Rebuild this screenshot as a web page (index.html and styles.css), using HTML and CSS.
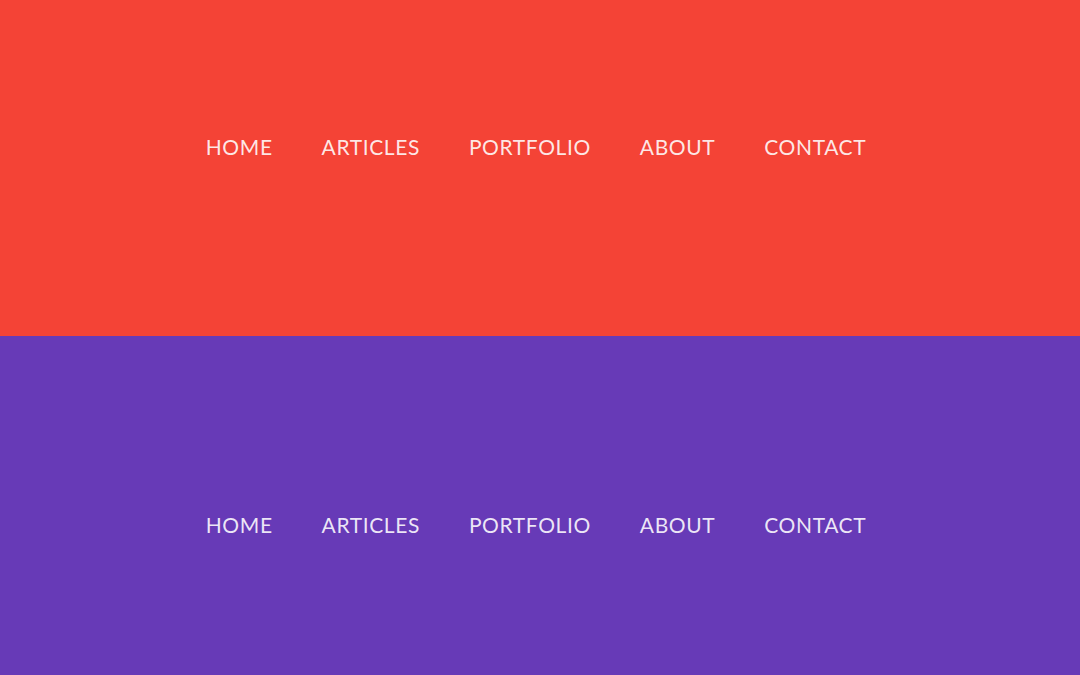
FILE: index.html
```html
<!DOCTYPE html>
<html lang="en">
<head>
    <meta charset="UTF-8">
    <meta name="viewport" content="width=device-width, initial-scale=1.0">
    <title>Menu</title>
    <link rel="stylesheet" href="styles.css">
</head>
<body>
    <section class="band band-red">
        <nav class="menu">
            <a href="#">Home</a>
            <a href="#">Articles</a>
            <a href="#">Portfolio</a>
            <a href="#">About</a>
            <a href="#">Contact</a>
        </nav>
    </section>
    <section class="band band-purple">
        <nav class="menu">
            <a href="#">Home</a>
            <a href="#">Articles</a>
            <a href="#">Portfolio</a>
            <a href="#">About</a>
            <a href="#">Contact</a>
        </nav>
    </section>
</body>
</html>
```

FILE: styles.css
```css
body {
    margin: 0;
    font-family: 'Lato', 'Open Sans', sans-serif;
    overflow: hidden;
}
.band {
    box-sizing: border-box;
}
.band-red {
    background: #f44336;
    height: 336px;
    padding-top: 135px;
}
.band-purple {
    background: #673ab7;
    height: 339px;
    padding-top: 177px;
}
.menu {
    display: flex;
    justify-content: center;
    gap: 49px;
    padding-right: 8px;
}
.menu a {
    color: rgba(255, 255, 255, 0.88);
    text-decoration: none;
    text-transform: uppercase;
    font-size: 21px;
    line-height: 24px;
    letter-spacing: 0.6px;
}
```
